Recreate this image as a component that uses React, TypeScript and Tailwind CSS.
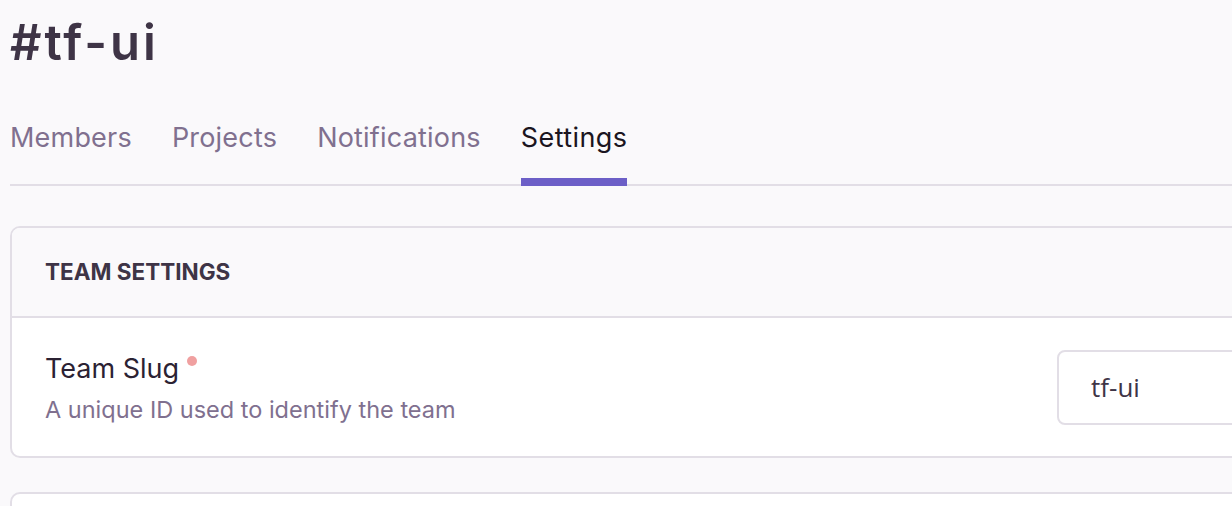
import React from 'react'

const tabs = ['Members', 'Projects', 'Notifications', 'Settings']

export default function App() {
  return (
    <div
      className="h-[506px] w-[1232px] overflow-hidden bg-[#faf9fb] pl-[10px] text-[#2b2233]"
      style={{ fontFamily: 'Inter, "Noto Sans", sans-serif' }}
    >
      <div className="w-[1400px]">
        <h1 className="pt-[10px] text-[49px] font-semibold leading-[66px] tracking-[3px] text-[#3e3446]">
          #tf-ui
        </h1>

        <nav className="mt-[42px] flex gap-[40px] border-b-2 border-[#e2dee6]">
          {tabs.map((t) => {
            const active = t === 'Settings'
            return (
              <div
                key={t}
                className={
                  active
                    ? 'relative pb-[26px] text-[27px] leading-[40px] tracking-[0.4px] text-[#1a1520]'
                    : 'relative pb-[26px] text-[27px] leading-[40px] tracking-[0.2px] text-[#80708f]'
                }
              >
                {t}
                {active && (
                  <div className="absolute right-0 bottom-[-2px] left-0 h-[8px] bg-[#6c5fc7]" />
                )}
              </div>
            )
          })}
        </nav>

        <section className="mt-[40px] overflow-hidden rounded-[10px] border-2 border-[#e2dee6] bg-white">
          <div className="flex h-[90px] items-center border-b-2 border-[#e2dee6] bg-[#faf9fb] px-[33px]">
            <span className="text-[22.5px] font-bold text-[#3e3446]">TEAM SETTINGS</span>
          </div>
          <div className="flex h-[138px] items-center justify-between px-[33px]">
            <div className="flex flex-col gap-[11px] pt-[4px]">
              <div className="flex items-start">
                <span className="text-[27px] leading-[30px] text-[#2b2233]">Team Slug</span>
                <span className="mt-[2px] ml-[8px] h-[10px] w-[10px] rounded-full bg-[#f0a0a0]" />
              </div>
              <div className="text-[23.5px] leading-[30px] text-[#80708f]">
                A unique ID used to identify the team
              </div>
            </div>
            <div className="mr-[-2px] flex h-[75px] w-[320px] items-center rounded-[8px] border-2 border-[#e2dee6] px-[32px]">
              <span
                className="text-[26px] text-[#3e3446]"
                style={{ fontFamily: '"Open Sans", sans-serif' }}
              >
                tf-ui
              </span>
            </div>
          </div>
        </section>

        <section className="mt-[34px] h-[100px] rounded-[10px] border-2 border-[#e2dee6] bg-white" />
      </div>
    </div>
  )
}
